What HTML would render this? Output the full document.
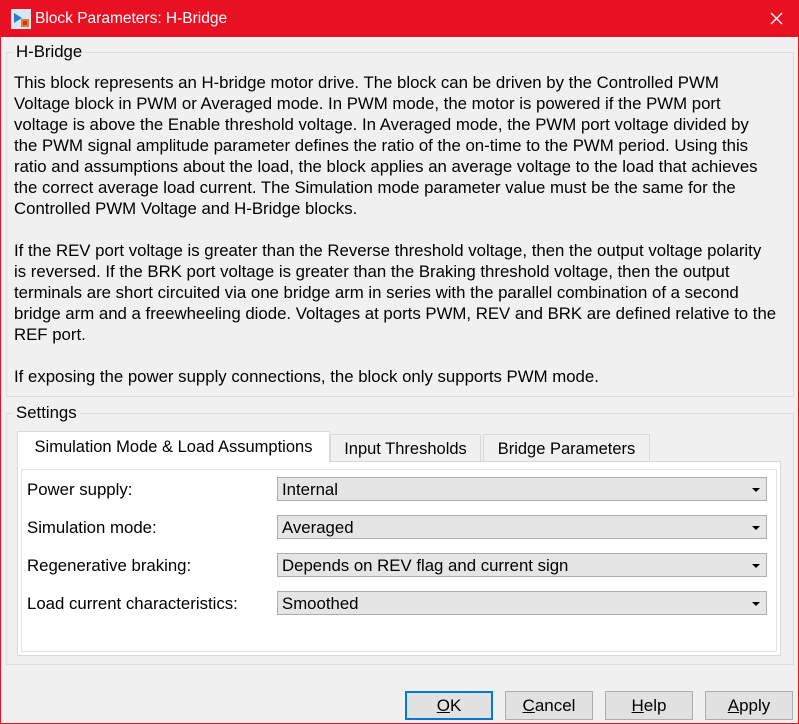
<!DOCTYPE html>
<html><head><style>
body{margin:0;width:799px;height:724px;overflow:hidden;background:#f0f0f0;font-family:"Liberation Sans",sans-serif;font-size:16.8px;color:#000;position:relative}
.win{position:absolute;left:0;top:0;width:797px;height:722px;border:1px solid #e81123;}
.title{position:absolute;left:0;top:0;width:799px;height:37px;background:#e81123;color:#fff;font-size:15px}
.abs{position:absolute;white-space:nowrap}
.fs{position:absolute;border:1px solid #dcdcdc;}
.lg{position:absolute;background:#f0f0f0;padding:0 3px;white-space:nowrap}
.txt{position:absolute;left:14px;top:72px;line-height:21px;white-space:nowrap}
.dd{position:absolute;left:277px;height:24px;background:#e5e5e5;border:1px solid #adadad;line-height:23px;padding-left:4px;box-sizing:border-box;width:490px}
.dd:after{content:"";position:absolute;right:6px;top:10px;border-left:4px solid transparent;border-right:4px solid transparent;border-top:4px solid #000}
.lbl{position:absolute;left:27px}
.btn{position:absolute;top:691px;width:88px;height:29px;background:#e1e1e1;border:1px solid #adadad;box-sizing:border-box;text-align:center;line-height:27px;font-size:17px}
.tab{position:absolute;top:434px;height:28px;border:1px solid #d9d9d9;background:#f0f0f0;line-height:28px;text-align:center;box-sizing:border-box;font-size:16.5px}
</style></head><body>
<div class="win"></div>
<div class="title">
 <svg class="abs" style="left:11px;top:9px" width="20" height="20"><rect x="0" y="0" width="20" height="20" fill="#d8e6f2"/><path d="M3 4 L11 9 L3 14Z" fill="#2a7fc4"/><rect x="10" y="10" width="8" height="8" fill="#e57a2a"/><rect x="12" y="12" width="4" height="4" fill="#c23a1a"/></svg>
 <span class="abs" style="left:35px;top:10px;font-size:15.5px">Block Parameters: H-Bridge</span>
 <svg class="abs" style="left:770px;top:12px" width="13" height="13"><path d="M1 1L12 12M12 1L1 12" stroke="#fff" stroke-width="1.3"/></svg>
</div>
<div class="fs" style="left:6px;top:52px;width:786px;height:343px"></div>
<div class="lg" style="left:13px;top:42px">H-Bridge</div>
<div class="txt">This block represents an H-bridge motor drive. The block can be driven by the Controlled PWM<br>Voltage block in PWM or Averaged mode. In PWM mode, the motor is powered if the PWM port<br>voltage is above the Enable threshold voltage. In Averaged mode, the PWM port voltage divided by<br>the PWM signal amplitude parameter defines the ratio of the on-time to the PWM period. Using this<br>ratio and assumptions about the load, the block applies an average voltage to the load that achieves<br>the correct average load current. The Simulation mode parameter value must be the same for the<br>Controlled PWM Voltage and H-Bridge blocks.<br><br>If the REV port voltage is greater than the Reverse threshold voltage, then the output voltage polarity<br>is reversed. If the BRK port voltage is greater than the Braking threshold voltage, then the output<br>terminals are short circuited via one bridge arm in series with the parallel combination of a second<br>bridge arm and a freewheeling diode. Voltages at ports PWM, REV and BRK are defined relative to the<br>REF port.<br><br>If exposing the power supply connections, the block only supports PWM mode.</div>
<div class="fs" style="left:6px;top:413px;width:786px;height:250px"></div>
<div class="lg" style="left:13px;top:403px">Settings</div>
<div class="abs" style="left:17px;top:461px;width:764px;height:195px;border:1px solid #d9d9d9;background:#fff;box-sizing:border-box"></div>
<div class="tab" style="left:330px;width:151px">Input Thresholds</div>
<div class="tab" style="left:483px;width:167px">Bridge Parameters</div>
<div class="tab" style="left:17px;width:313px;top:431px;height:31px;background:#fff;border-bottom:none;line-height:31px">Simulation Mode &amp; Load Assumptions</div>
<div class="abs" style="left:21px;top:469px;width:756px;height:183px;border:1px solid #e3e3e3;box-sizing:border-box"></div>
<div class="lbl" style="top:480px">Power supply:</div><div class="dd" style="top:477px">Internal</div>
<div class="lbl" style="top:518px">Simulation mode:</div><div class="dd" style="top:515px">Averaged</div>
<div class="lbl" style="top:556px">Regenerative braking:</div><div class="dd" style="top:553px">Depends on REV flag and current sign</div>
<div class="lbl" style="top:594px">Load current characteristics:</div><div class="dd" style="top:591px">Smoothed</div>
<div class="btn" style="left:405px;border:2px solid #0078d7;line-height:25px"><u>O</u>K</div>
<div class="btn" style="left:505px"><u>C</u>ancel</div>
<div class="btn" style="left:605px"><u>H</u>elp</div>
<div class="btn" style="left:705px"><u>A</u>pply</div>
</body></html>
